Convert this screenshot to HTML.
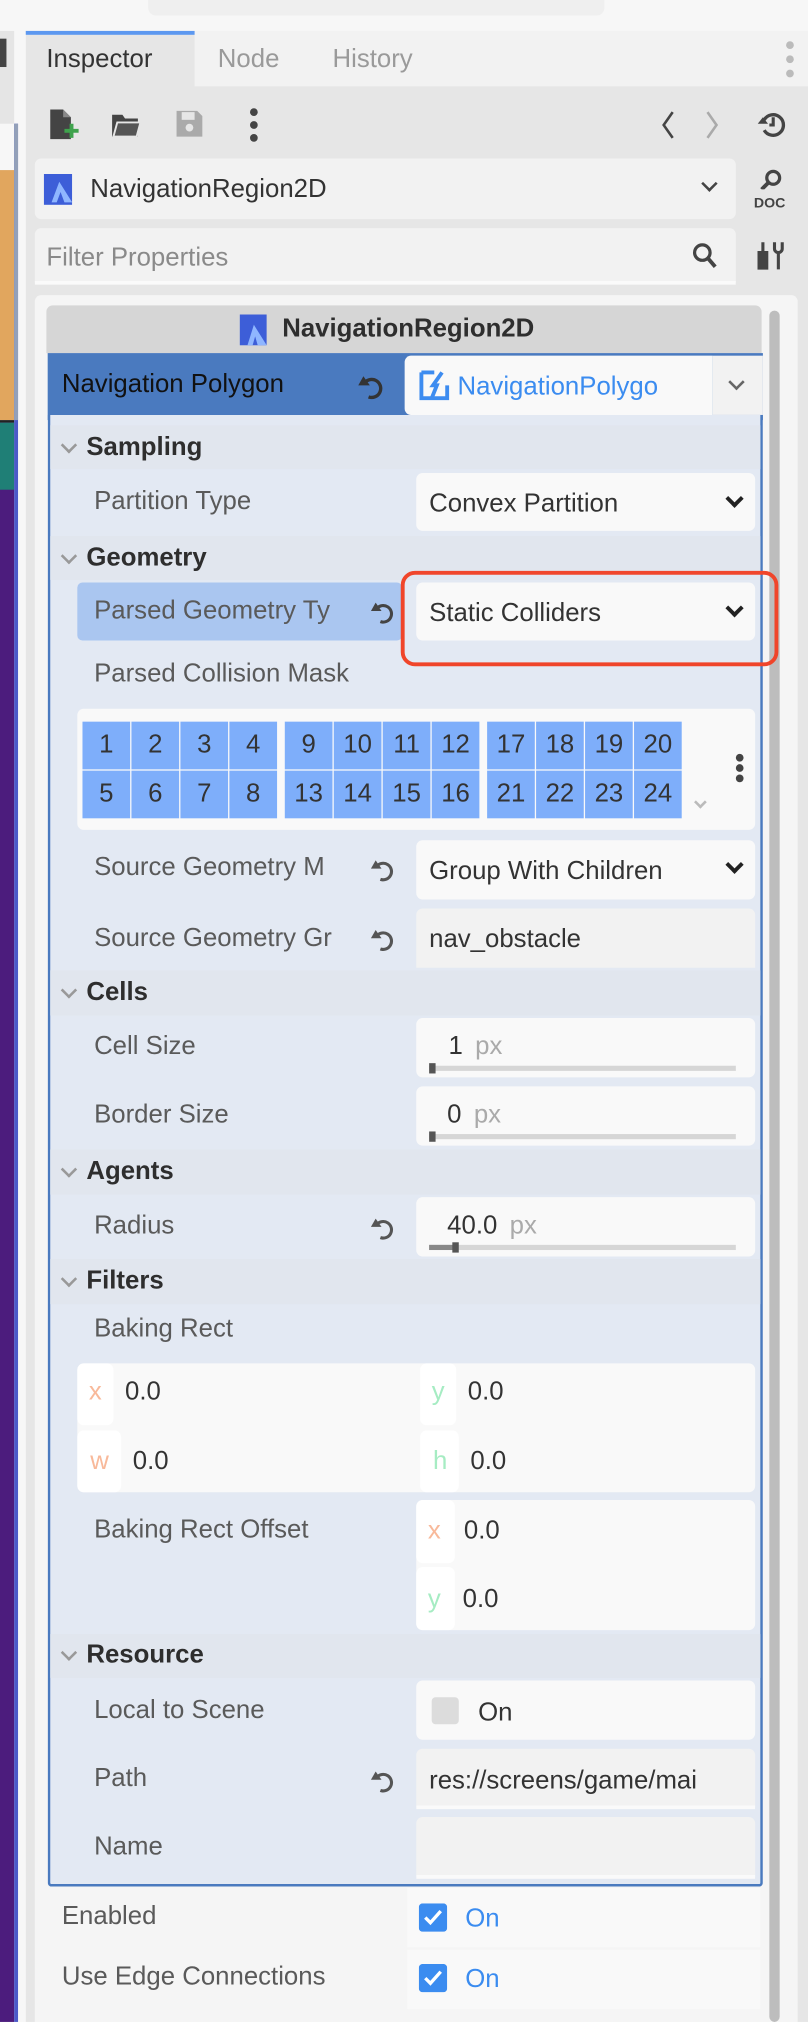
<!DOCTYPE html>
<html><head><meta charset="utf-8"><style>
*{margin:0;padding:0;box-sizing:border-box}
html,body{width:808px;height:2022px;overflow:hidden;background:#f7f7f7}
#w{position:absolute;left:0;top:0;width:627px;height:1569px;transform:scale(1.28868);transform-origin:0 0;font-family:"Liberation Sans",sans-serif;background:#f7f7f7}
.a{position:absolute}
.t{position:absolute;white-space:nowrap;font-size:20px;line-height:24px;color:#5a5a5a}
.v{color:#333}
.b{font-weight:bold;color:#2e2e2e}
.f{position:absolute;background:#f9f9f9;border-radius:5px}
.hd{position:absolute;left:39px;width:551px;background:#e1e6ee}
.chev{position:absolute;width:9px;height:9px;border-right:2px solid #999;border-bottom:2px solid #999;transform:rotate(45deg)}
.dd{position:absolute;width:10px;height:10px;border-right:3px solid #222;border-bottom:3px solid #222;transform:rotate(45deg)}
.cell{position:absolute;width:37px;height:37px;background:#7eaefa;color:#333;font-size:20px;text-align:center;line-height:37px}
.sl{position:absolute;height:4px;background:#d6d6d6}
.gr{position:absolute;width:5px;height:8px;background:#555}
</style></head><body><div id="w">
<!-- left strip -->
<div class="a" style="left:0;top:24px;width:11px;height:1545px;background:#e5e5e5"></div>
<div class="a" style="left:0;top:96px;width:11px;height:36px;background:#f7f7f7"></div>
<div class="a" style="left:0;top:132px;width:11px;height:194px;background:#e1a65e"></div>
<div class="a" style="left:0;top:326px;width:11px;height:2px;background:#222"></div>
<div class="a" style="left:0;top:328px;width:11px;height:1241px;background:#4c1c7d"></div>
<div class="a" style="left:0;top:328px;width:11px;height:52px;background:#1f7f76"></div>
<div class="a" style="left:11px;top:96px;width:3px;height:1473px;background:#4b59c8"></div>
<div class="a" style="left:11px;top:96px;width:3px;height:230px;background:#93a0b8"></div>
<div class="a" style="left:0;top:30px;width:5px;height:22px;background:#444"></div>
<!-- top pill -->
<div class="a" style="left:115px;top:0;width:354px;height:12px;background:#efefef;border-radius:0 0 6px 6px"></div>
<!-- panel -->
<div class="a" style="left:20px;top:24px;width:607px;height:1545px;background:#e6e6e6"></div>
<div class="a" style="left:151px;top:24px;width:476px;height:43px;background:#f2f2f2"></div>
<div class="a" style="left:20px;top:24px;width:131px;height:3px;background:#5c98f0"></div>
<div class="t v" style="left:36px;top:34px;font-size:20px">Inspector</div>
<div class="t" style="left:169px;top:34px;color:#9a9a9a">Node</div>
<div class="t" style="left:258px;top:34px;color:#9a9a9a">History</div>
<div class="a" style="left:610px;top:32px;width:6px;height:6px;border-radius:3px;background:#bbb;box-shadow:0 11px #bbb,0 22px #bbb"></div>
<!-- toolbar icons -->
<svg class="a" style="left:36px;top:84px" width="26" height="26" viewBox="0 0 26 26"><path d="M3 1h10l6 6v17H3z" fill="#444"/><path d="M13 1v6h6" fill="#888"/><path d="M14 16h4v-4h3v4h4v3h-4v4h-3v-4h-4z" fill="#3fa34d"/></svg>
<svg class="a" style="left:85px;top:85px" width="26" height="24" viewBox="0 0 26 24"><path d="M2 4h8l2 3h10v14H2z" fill="#444"/><path d="M6 10h18l-3 11H3z" fill="#555" stroke="#e6e6e6" stroke-width="1.5"/></svg>
<svg class="a" style="left:135px;top:84px" width="24" height="24" viewBox="0 0 24 24"><path d="M2 2h16l4 4v16H2z" fill="#aaa"/><rect x="6" y="3" width="10" height="6" fill="#e6e6e6"/><circle cx="12" cy="15" r="3" fill="#e6e6e6"/></svg>
<div class="a" style="left:194px;top:84px;width:6px;height:6px;border-radius:3px;background:#444;box-shadow:0 10px #444,0 20px #444"></div>
<svg class="a" style="left:511px;top:85px" width="14" height="24"><path d="M11 2L4 12l7 10" fill="none" stroke="#444" stroke-width="2"/></svg>
<svg class="a" style="left:546px;top:85px" width="14" height="24"><path d="M3 2l7 10-7 10" fill="none" stroke="#aaa" stroke-width="2"/></svg>
<svg class="a" style="left:587px;top:85px" width="24" height="24" viewBox="0 0 24 24"><path d="M6 8a8 8 0 1 1 0 8" fill="none" stroke="#444" stroke-width="2.6"/><path d="M1 11h8l-4-5z" fill="#444"/><path d="M13 6v6h-3" fill="none" stroke="#444" stroke-width="2.4"/></svg>
<!-- node dropdown -->
<div class="a" style="left:27px;top:123px;width:544px;height:47px;background:#f2f2f2;border-radius:5px"></div>
<svg class="a" style="left:34px;top:135px" width="22" height="24"><rect width="22" height="24" fill="#3d5ed8"/><path d="M12 6l-6 16h4l3-8 3 8h6z" fill="#8fb6ff"/><path d="M14 6l-7 18" stroke="#fff" stroke-width="0"/></svg>
<div class="t v" style="left:70px;top:135px">NavigationRegion2D</div>
<div class="dd" style="left:546px;top:138px;border-color:#444;width:9px;height:9px;border-width:2.4px"></div>
<div class="t b" style="left:585px;top:146px;font-size:11px;color:#444;font-weight:900">DOC</div>
<svg class="a" style="left:586px;top:131px" width="24" height="16"><circle cx="14" cy="7" r="5" fill="none" stroke="#444" stroke-width="2.5"/><path d="M10 11l-5 5" stroke="#444" stroke-width="3"/></svg>
<!-- filter -->
<div class="a" style="left:27px;top:177px;width:544px;height:44px;background:#f2f2f2;border-bottom:3px solid #fafafa;border-radius:5px 5px 0 0"></div>
<div class="t" style="left:36px;top:188px;color:#8a8a8a">Filter Properties</div>
<svg class="a" style="left:536px;top:187px" width="24" height="24"><circle cx="9" cy="9" r="6" fill="none" stroke="#444" stroke-width="2.5"/><path d="M13 13l6 7" stroke="#444" stroke-width="3"/></svg>
<svg class="a" style="left:586px;top:186px" width="24" height="26"><path d="M6 2v8M3 10h6v12H3z" stroke="#444" stroke-width="2.4" fill="#444"/><path d="M15 2v5a3 3 0 0 0 6 0V2M18 9v14" stroke="#444" stroke-width="2.4" fill="none"/></svg>
<!-- props area -->
<div class="a" style="left:27px;top:229px;width:592px;height:1340px;background:#f5f5f5;border-radius:5px 5px 0 0"></div>
<div class="a" style="left:597px;top:241px;width:8px;height:1328px;background:#bdbdbd;border-radius:4px"></div>
<div class="a" style="left:36px;top:237px;width:555px;height:37px;background:#d6d6d6;border-radius:5px 5px 0 0"></div>
<svg class="a" style="left:186px;top:244px" width="21" height="24"><rect width="21" height="24" fill="#3d5ed8"/><path d="M11 8l-5 16h4l2-7 2 7h7z" fill="#8fb6ff"/></svg>
<div class="t b" style="left:219px;top:243px;font-size:20px">NavigationRegion2D</div>
<!-- nav polygon row -->
<div class="a" style="left:37px;top:274px;width:555px;height:52px;background:#4a7abf"></div>
<div class="t" style="left:48px;top:286px;color:#111">Navigation Polygon</div>
<svg class="a" style="left:276px;top:288px" width="24" height="24" viewBox="0 0 24 24"><path d="M7 9a7 7 0 1 1 3 11" fill="none" stroke="#333" stroke-width="2.6"/><path d="M2 11h9L6 4z" fill="#333"/></svg>
<div class="a" style="left:314px;top:276px;width:239px;height:46px;background:#f9f9f9;border-radius:5px 0 0 5px"></div>
<div class="a" style="left:553px;top:276px;width:39px;height:46px;background:#f2f2f2"></div>
<svg class="a" style="left:325px;top:287px" width="24" height="24"><path d="M2 2h10M2 2v20h20V12" fill="none" stroke="#3d8cf0" stroke-width="3"/><path d="M18 2l-7 10 3 0-4 10" fill="none" stroke="#3d8cf0" stroke-width="3"/></svg>
<div class="t" style="left:355px;top:288px;color:#3b8cf0">NavigationPolygo</div>
<div class="chev" style="left:567px;top:292px;border-color:#666"></div>
<!-- inner box -->
<div class="a" style="left:37px;top:322px;width:555px;height:1142px;border:2px solid #4a7abf;border-top:none;background:#e3e9f3;border-radius:0 0 3px 3px"></div>
<!-- Sampling -->
<div class="hd" style="top:330px;height:34px"></div>
<div class="chev" style="left:49px;top:341px"></div>
<div class="t b" style="left:67px;top:335px">Sampling</div>
<div class="t" style="left:73px;top:377px">Partition Type</div>
<div class="f" style="left:323px;top:367px;width:263px;height:45px"></div>
<div class="t v" style="left:333px;top:379px">Convex Partition</div>
<div class="dd" style="left:565px;top:382px"></div>
<!-- Geometry -->
<div class="hd" style="top:416px;height:34px"></div>
<div class="chev" style="left:49px;top:427px"></div>
<div class="t b" style="left:67px;top:421px">Geometry</div>
<div class="a" style="left:60px;top:452px;width:252px;height:45px;background:#aac6f0;border-radius:4px"></div>
<div class="t" style="left:73px;top:462px">Parsed Geometry Ty</div>
<svg class="a" style="left:286px;top:464px" width="22" height="22" viewBox="0 0 24 24"><path d="M7 9a7 7 0 1 1 3 11" fill="none" stroke="#444" stroke-width="2.6"/><path d="M2 11h9L6 4z" fill="#444"/></svg>
<div class="f" style="left:323px;top:452px;width:263px;height:45px"></div>
<div class="t v" style="left:333px;top:464px">Static Colliders</div>
<div class="dd" style="left:565px;top:467px"></div>
<div class="a" style="left:311px;top:443px;width:293px;height:74px;border:3.5px solid #f0452a;border-radius:11px"></div>
<div class="t" style="left:73px;top:511px">Parsed Collision Mask</div>
<div class="f" style="left:60px;top:550px;width:526px;height:94px"></div>
<div class="cell" style="left:64px;top:560px">1</div><div class="cell" style="left:102px;top:560px">2</div><div class="cell" style="left:140px;top:560px">3</div><div class="cell" style="left:178px;top:560px">4</div>
<div class="cell" style="left:221px;top:560px">9</div><div class="cell" style="left:259px;top:560px">10</div><div class="cell" style="left:297px;top:560px">11</div><div class="cell" style="left:335px;top:560px">12</div>
<div class="cell" style="left:378px;top:560px">17</div><div class="cell" style="left:416px;top:560px">18</div><div class="cell" style="left:454px;top:560px">19</div><div class="cell" style="left:492px;top:560px">20</div>
<div class="cell" style="left:64px;top:598px">5</div><div class="cell" style="left:102px;top:598px">6</div><div class="cell" style="left:140px;top:598px">7</div><div class="cell" style="left:178px;top:598px">8</div>
<div class="cell" style="left:221px;top:598px">13</div><div class="cell" style="left:259px;top:598px">14</div><div class="cell" style="left:297px;top:598px">15</div><div class="cell" style="left:335px;top:598px">16</div>
<div class="cell" style="left:378px;top:598px">21</div><div class="cell" style="left:416px;top:598px">22</div><div class="cell" style="left:454px;top:598px">23</div><div class="cell" style="left:492px;top:598px">24</div>
<div class="a" style="left:571px;top:585px;width:6px;height:6px;border-radius:3px;background:#444;box-shadow:0 8px #444,0 16px #444"></div>
<div class="chev" style="left:540px;top:619px;width:7px;height:7px;border-color:#bbb"></div>
<div class="t" style="left:73px;top:661px">Source Geometry M</div>
<svg class="a" style="left:286px;top:664px" width="22" height="22" viewBox="0 0 24 24"><path d="M7 9a7 7 0 1 1 3 11" fill="none" stroke="#555" stroke-width="2.6"/><path d="M2 11h9L6 4z" fill="#555"/></svg>
<div class="f" style="left:323px;top:652px;width:263px;height:46px"></div>
<div class="t v" style="left:333px;top:664px">Group With Children</div>
<div class="dd" style="left:565px;top:666px"></div>
<div class="t" style="left:73px;top:716px">Source Geometry Gr</div>
<svg class="a" style="left:286px;top:718px" width="22" height="22" viewBox="0 0 24 24"><path d="M7 9a7 7 0 1 1 3 11" fill="none" stroke="#555" stroke-width="2.6"/><path d="M2 11h9L6 4z" fill="#555"/></svg>
<div class="a" style="left:323px;top:705px;width:263px;height:46px;background:#f2f2f2;border-radius:5px 5px 0 0"></div>
<div class="t v" style="left:333px;top:717px">nav_obstacle</div>
<!-- Cells -->
<div class="hd" style="top:753px;height:35px"></div>
<div class="chev" style="left:49px;top:764px"></div>
<div class="t b" style="left:67px;top:758px">Cells</div>
<div class="t" style="left:73px;top:800px">Cell Size</div>
<div class="f" style="left:323px;top:790px;width:263px;height:46px"></div>
<div class="t v" style="left:348px;top:800px">1 <span style="color:#aaa;margin-left:4px">px</span></div>
<div class="sl" style="left:333px;top:827px;width:238px"></div><div class="gr" style="left:333px;top:825px"></div>
<div class="t" style="left:73px;top:853px">Border Size</div>
<div class="f" style="left:323px;top:843px;width:263px;height:46px"></div>
<div class="t v" style="left:347px;top:853px">0 <span style="color:#aaa;margin-left:4px">px</span></div>
<div class="sl" style="left:333px;top:880px;width:238px"></div><div class="gr" style="left:333px;top:878px"></div>
<!-- Agents -->
<div class="hd" style="top:892px;height:35px"></div>
<div class="chev" style="left:49px;top:903px"></div>
<div class="t b" style="left:67px;top:897px">Agents</div>
<div class="t" style="left:73px;top:939px">Radius</div>
<svg class="a" style="left:286px;top:942px" width="22" height="22" viewBox="0 0 24 24"><path d="M7 9a7 7 0 1 1 3 11" fill="none" stroke="#555" stroke-width="2.6"/><path d="M2 11h9L6 4z" fill="#555"/></svg>
<div class="f" style="left:323px;top:929px;width:263px;height:46px"></div>
<div class="t v" style="left:347px;top:939px">40.0 <span style="color:#aaa;margin-left:4px">px</span></div>
<div class="sl" style="left:333px;top:966px;width:238px"></div><div class="a" style="left:333px;top:966px;width:20px;height:4px;background:#888"></div><div class="gr" style="left:351px;top:964px"></div>
<!-- Filters -->
<div class="hd" style="top:977px;height:35px"></div>
<div class="chev" style="left:49px;top:988px"></div>
<div class="t b" style="left:67px;top:982px">Filters</div>
<div class="t" style="left:73px;top:1019px">Baking Rect</div>
<div class="f" style="left:60px;top:1058px;width:526px;height:100px"></div>
<div class="a" style="left:60px;top:1058px;width:28px;height:48px;background:#fff;border-radius:5px"></div>
<div class="a" style="left:60px;top:1110px;width:34px;height:48px;background:#fff;border-radius:5px"></div>
<div class="a" style="left:326px;top:1058px;width:28px;height:48px;background:#fff;border-radius:5px"></div>
<div class="a" style="left:326px;top:1110px;width:30px;height:48px;background:#fff;border-radius:5px"></div>
<div class="t" style="left:69px;top:1068px;color:#f8b99a">x</div><div class="t v" style="left:97px;top:1068px">0.0</div>
<div class="t" style="left:335px;top:1068px;color:#a6ecc3">y</div><div class="t v" style="left:363px;top:1068px">0.0</div>
<div class="t" style="left:70px;top:1122px;color:#f8b99a">w</div><div class="t v" style="left:103px;top:1122px">0.0</div>
<div class="t" style="left:336px;top:1122px;color:#a6ecc3">h</div><div class="t v" style="left:365px;top:1122px">0.0</div>
<div class="t" style="left:73px;top:1175px">Baking Rect Offset</div>
<div class="f" style="left:323px;top:1164px;width:263px;height:101px"></div>
<div class="a" style="left:323px;top:1164px;width:30px;height:49px;background:#fff;border-radius:5px"></div>
<div class="a" style="left:323px;top:1216px;width:30px;height:49px;background:#fff;border-radius:5px"></div>
<div class="t" style="left:332px;top:1176px;color:#f8b99a">x</div><div class="t v" style="left:360px;top:1176px">0.0</div>
<div class="t" style="left:332px;top:1229px;color:#a6ecc3">y</div><div class="t v" style="left:359px;top:1229px">0.0</div>
<!-- Resource -->
<div class="hd" style="top:1268px;height:34px"></div>
<div class="chev" style="left:49px;top:1278px"></div>
<div class="t b" style="left:67px;top:1272px">Resource</div>
<div class="t" style="left:73px;top:1315px">Local to Scene</div>
<div class="f" style="left:323px;top:1304px;width:263px;height:46px"></div>
<div class="a" style="left:335px;top:1317px;width:21px;height:21px;background:#dcdcdc;border-radius:3px"></div>
<div class="t v" style="left:371px;top:1317px">On</div>
<div class="t" style="left:73px;top:1368px">Path</div>
<svg class="a" style="left:286px;top:1371px" width="22" height="22" viewBox="0 0 24 24"><path d="M7 9a7 7 0 1 1 3 11" fill="none" stroke="#555" stroke-width="2.6"/><path d="M2 11h9L6 4z" fill="#555"/></svg>
<div class="a" style="left:323px;top:1357px;width:263px;height:47px;background:#f2f2f2;border-bottom:3px solid #fafafa;border-radius:5px 5px 0 0"></div>
<div class="t v" style="left:333px;top:1370px">res://screens/game/mai</div>
<div class="t" style="left:73px;top:1421px">Name</div>
<div class="a" style="left:323px;top:1410px;width:263px;height:48px;background:#f2f2f2;border-bottom:3px solid #fafafa;border-radius:5px 5px 0 0"></div>
<!-- bottom rows -->
<div class="a" style="left:316px;top:1465px;width:274px;height:46px;background:#f9f9f9"></div>
<div class="a" style="left:316px;top:1513px;width:274px;height:46px;background:#f9f9f9"></div>
<div class="t" style="left:48px;top:1475px">Enabled</div>
<div class="t" style="left:48px;top:1522px">Use Edge Connections</div>
<svg class="a" style="left:325px;top:1477px" width="22" height="22"><rect width="22" height="22" rx="3" fill="#3b8cf0"/><path d="M5 11l4 4 8-9" fill="none" stroke="#fff" stroke-width="2.6"/></svg>
<svg class="a" style="left:325px;top:1524px" width="22" height="22"><rect width="22" height="22" rx="3" fill="#3b8cf0"/><path d="M5 11l4 4 8-9" fill="none" stroke="#fff" stroke-width="2.6"/></svg>
<div class="t" style="left:361px;top:1477px;color:#3b8cf0">On</div>
<div class="t" style="left:361px;top:1524px;color:#3b8cf0">On</div>
</div></body></html>
